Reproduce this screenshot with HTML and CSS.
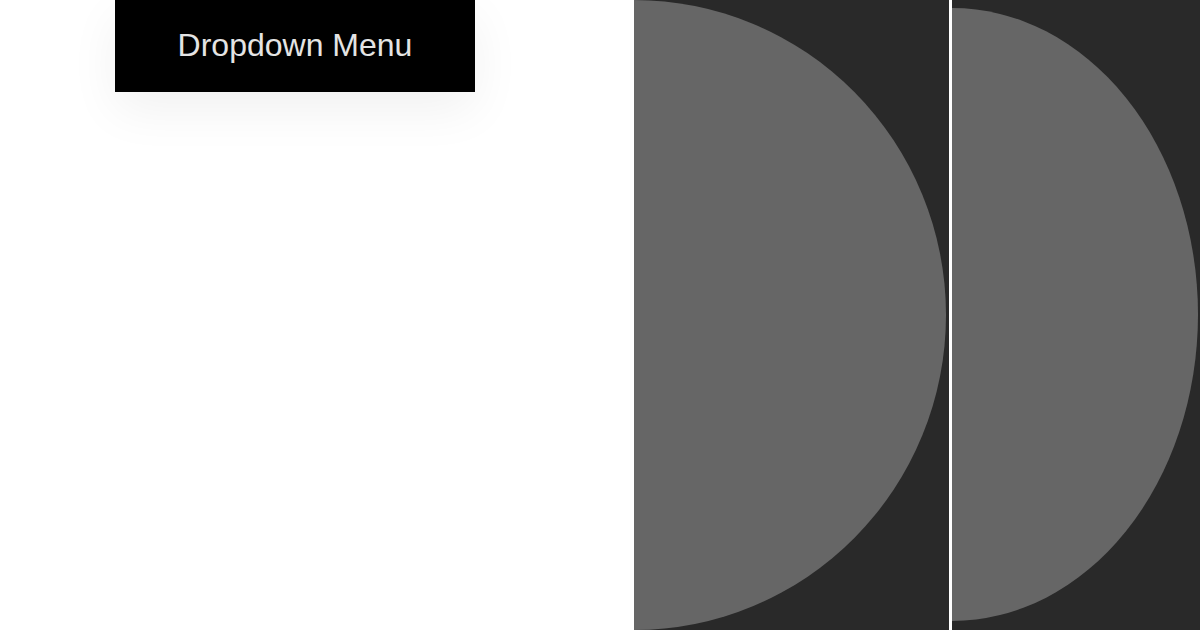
FILE: index.html
```html
<!DOCTYPE html>
<html>
<head>
<meta charset="utf-8">
<link rel="stylesheet" href="styles.css">
</head>
<body>
<div class="page">
  <section class="left">
    <button class="dropdown">Dropdown Menu</button>
  </section>
  <section class="panel panel-one">
    <div class="half half-one"></div>
  </section>
  <section class="panel panel-two">
    <div class="half half-two"></div>
  </section>
</div>
</body>
</html>
```

FILE: styles.css
```css
html, body {
  margin: 0;
  padding: 0;
  background: #ffffff;
}
.page {
  display: flex;
  width: 1200px;
  height: 630px;
  overflow: hidden;
  background: #ffffff;
}
.left {
  width: 634px;
  flex: none;
  padding-left: 115px;
  box-sizing: border-box;
}
.dropdown {
  display: flex;
  align-items: center;
  justify-content: center;
  width: 360px;
  height: 92px;
  margin: 0;
  padding: 0 0 2px;
  border: none;
  background: #000000;
  color: #e4e4e4;
  font-family: "Liberation Sans", Arial, sans-serif;
  font-size: 32px;
  box-shadow: 0 18px 50px rgba(0, 0, 0, 0.06);
}
.panel {
  background: #292929;
  height: 630px;
  flex: none;
  display: flex;
  flex-direction: column;
}
.panel-one {
  width: 315px;
}
.panel-two {
  width: 248px;
  margin-left: 3px;
  padding: 8px 0 9px;
  box-sizing: border-box;
}
.half {
  background: #666666;
  border-radius: 0 100% 100% 0 / 0 50% 50% 0;
  flex: 1;
}
.half-one {
  width: 312px;
}
.half-two {
  width: 246px;
}
```
